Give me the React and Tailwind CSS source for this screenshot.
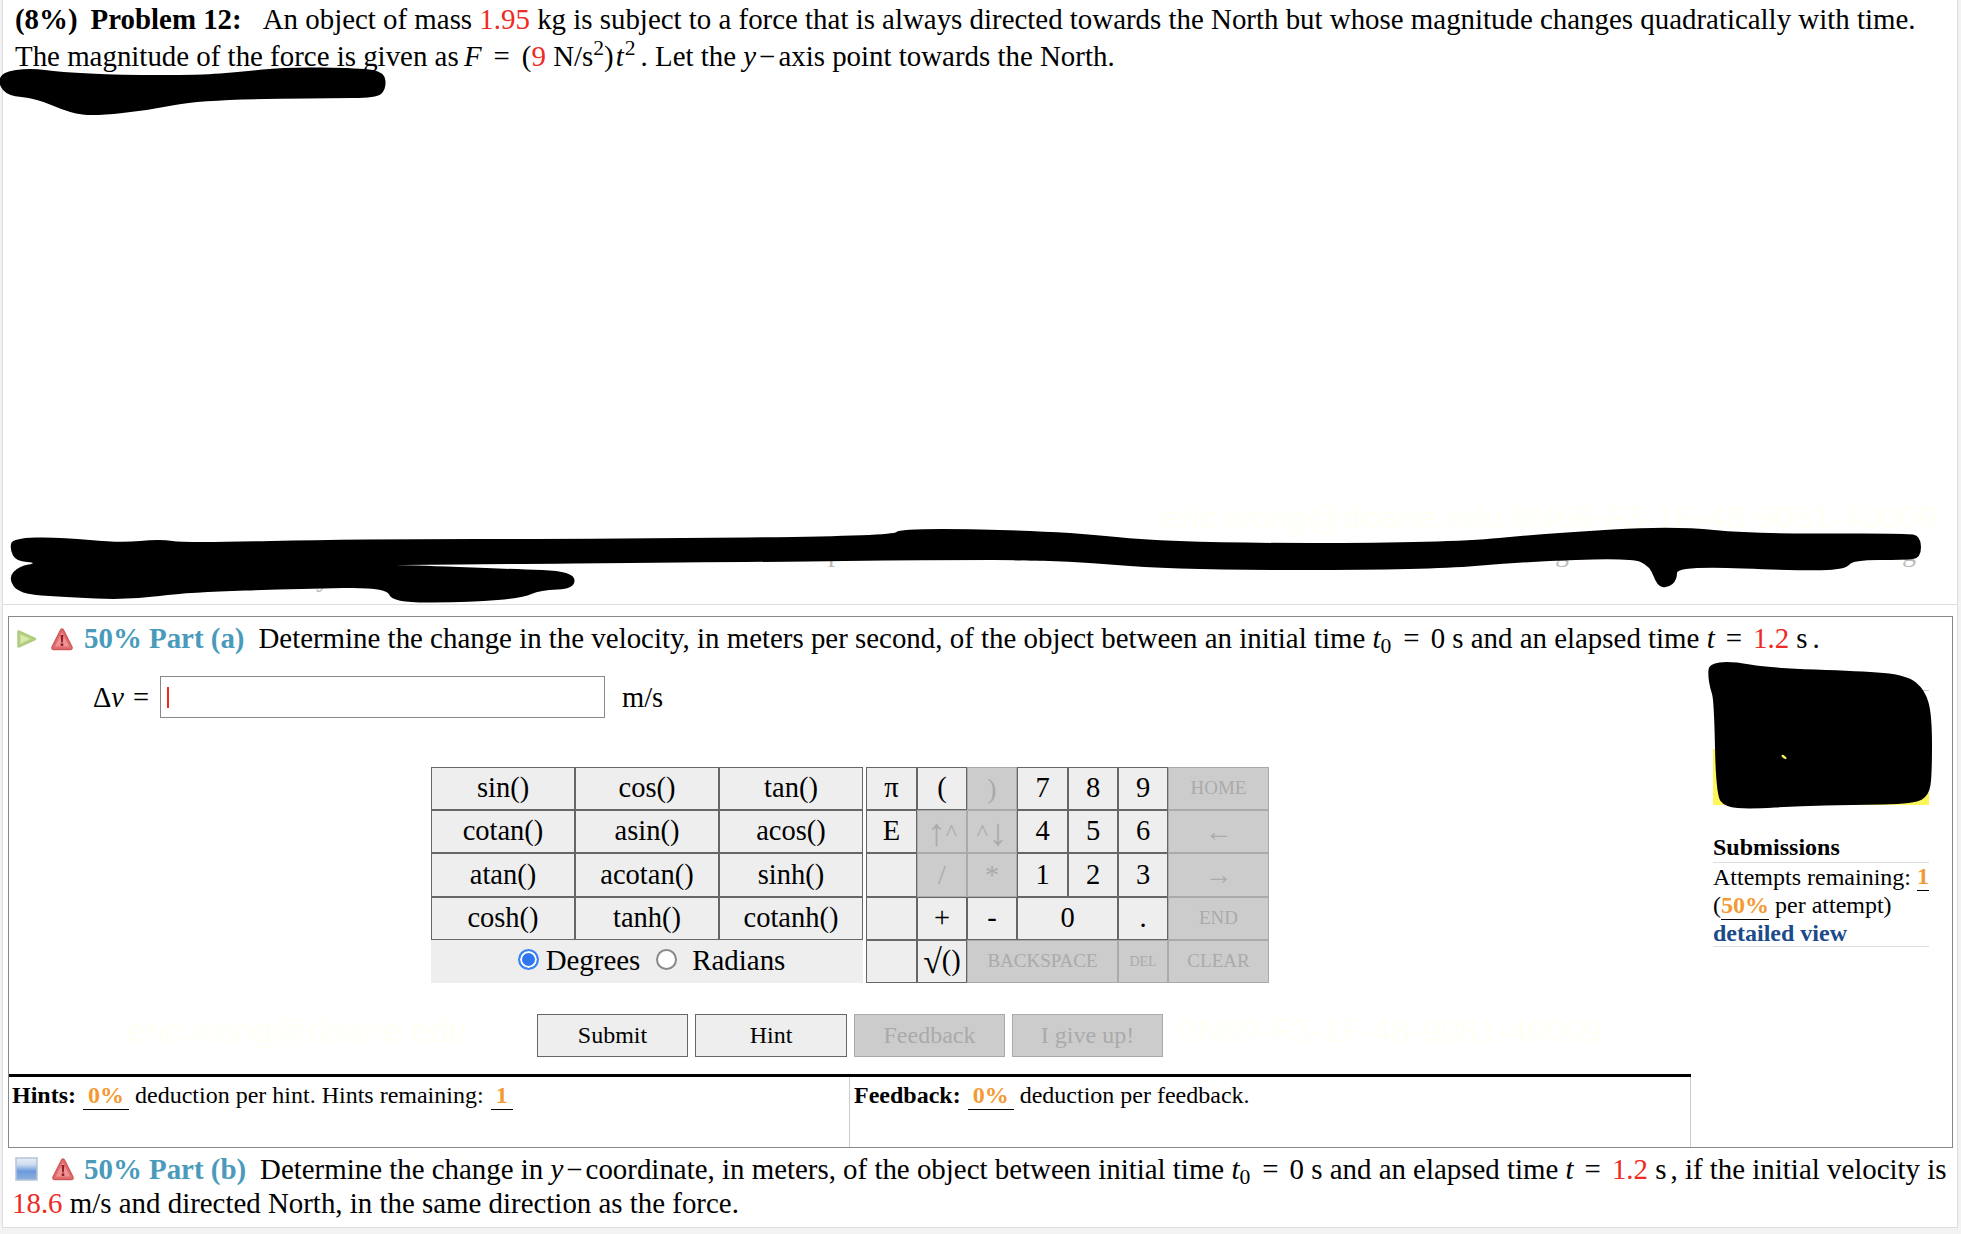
import React from "react";

const smooth = (pts) => {
  const n = pts.length;
  const mid = (a, b) => [(a[0] + b[0]) / 2, (a[1] + b[1]) / 2];
  let d = "";
  const start = mid(pts[n - 1], pts[0]);
  d += `M${start[0]} ${start[1]}`;
  for (let i = 0; i < n; i++) {
    const m = mid(pts[i], pts[(i + 1) % n]);
    d += ` Q${pts[i][0]} ${pts[i][1]} ${m[0]} ${m[1]}`;
  }
  return d + " Z";
};

const blobA = [[2, 72], [30, 68], [60, 72], [120, 75], [200, 75], [240, 72], [285, 67], [360, 68], [385, 72], [386, 90], [376, 98], [330, 98], [200, 100], [150, 110], [95, 116], [70, 113], [35, 98], [8, 96], [-2, 84]];
const blobB = [
  [12, 538], [60, 537], [120, 543], [160, 539], [185, 543], [357, 539], [600, 539], [893, 536], [900, 528], [1061, 531], [1172, 543], [1447, 543], [1551, 533], [1674, 526], [1754, 534], [1905, 533], [1921, 536], [1921, 558], [1905, 560], [1853, 560], [1846, 569], [1809, 571], [1677, 566], [1677, 580], [1668, 588], [1657, 586], [1650, 566], [1631, 558], [1521, 562], [1429, 570], [1172, 570], [1061, 560], [925, 560], [765, 562], [383, 565], [408, 565], [510, 569], [574, 571], [575, 589], [540, 590], [523, 598], [472, 602], [392, 603], [387, 587], [300, 589], [191, 592], [128, 600], [64, 597], [19, 594], [8, 578], [19, 566], [38, 563], [16, 561], [10, 550],
];
const blobC = [[1708, 675], [1709, 664], [1730, 661], [1770, 668], [1860, 671], [1907, 675], [1925, 690], [1932, 715], [1932, 775], [1929, 795], [1915, 804], [1850, 805], [1800, 806], [1750, 809], [1725, 807], [1716, 795], [1714, 700], [1710, 688]];

const GreenArrow = () => (
  <svg width="21" height="20" viewBox="0 0 21 20" className="shrink-0">
    <path d="M2.5 2.5 L19 10 L2.5 17.5 Z" fill="#c6dd8e" stroke="#b1cc80" strokeWidth="2.5" strokeLinejoin="round" />
    <path d="M5 6 L13 10 L5 14 Z" fill="#d9eab0" />
  </svg>
);

const Warn = () => (
  <svg width="24" height="24" viewBox="0 0 24 24" className="shrink-0">
    <path d="M12 2 C13 2 13.5 3 14 4 L22 20 C22.5 21.5 22 22.5 20 22.5 L4 22.5 C2 22.5 1.5 21.5 2 20 L10 4 C10.5 3 11 2 12 2 Z" fill="#e46c6e" stroke="#c9585a" strokeWidth="1.3" />
    <path d="M12 5.5 L19 19.5 L5 19.5 Z" fill="#ee9496" />
    <path d="M10.6 8 H13.4 L12.8 15.5 H11.2 Z" fill="#8e2226" />
    <rect x="10.7" y="16.4" width="2.6" height="2.6" fill="#8e2226" />
  </svg>
);

const BlueBox = () => (
  <svg width="23" height="24" viewBox="0 0 23 24" className="shrink-0">
    <defs>
      <linearGradient id="bb" x1="0" y1="0" x2="0" y2="1">
        <stop offset="0" stopColor="#e6edf6" />
        <stop offset="0.3" stopColor="#cfdcf0" />
        <stop offset="0.6" stopColor="#6a9adb" />
        <stop offset="1" stopColor="#8fb0dd" />
      </linearGradient>
    </defs>
    <rect x="1" y="1" width="21" height="22" fill="url(#bb)" stroke="#b4c3d6" strokeWidth="1.5" />
  </svg>
);

const Red = ({ children }) => <span className="text-[#ee2a24]">{children}</span>;
const Eq = () => <span className="mx-[11px]">=</span>;
const Orange = ({ children, className = "" }) => (
  <span className={`inline-block font-bold text-[#f39a34] border-b border-black leading-[27px] ${className}`}>{children}</span>
);

const Fn = ({ children }) => (
  <div className="flex items-center justify-center bg-[#eeeeee] border border-[#666666] text-[28.5px] text-black">{children}</div>
);
const Key = ({ children, span = "", size = "text-[28.5px]" }) => (
  <div className={`flex items-center justify-center bg-[#eeeeee] border border-[#666666] text-black ${size} ${span}`}>{children}</div>
);
const Off = ({ children, span = "", size = "text-[19px]" }) => (
  <div className={`flex items-center justify-center bg-[#cccccc] border border-[#aaaaaa] text-[#aaaaaa] ${size} ${span}`}>{children}</div>
);

const Btn = ({ children, off, w }) => (
  <div className={`flex items-center justify-center h-[43px] border text-[24px] pb-[1px] ${w} ${off ? "bg-[#cccccc] border-[#aaaaaa] text-[#aaaaaa]" : "bg-[#eeeeee] border-[#666666] text-black"}`}>
    {children}
  </div>
);

export default function App() {
  return (
    <div className="relative w-[1961px] h-[1234px] overflow-hidden bg-[#f3f3f3] text-black font-['Liberation_Serif',serif]">
      <div className="ml-[2px] w-[1956px] h-[1228px] bg-white border-x border-b border-[#dddddd] flex flex-col">
        {/* Problem statement */}
        <div className="h-[605px] border-b border-[#dddddd] pl-[12px] pt-[1px] text-[28.9px] leading-[37px] whitespace-nowrap">
          <div>
            <b>(8%)</b>
            <b className="ml-[13px]">Problem 12:</b>
            <span className="ml-[21px]">An object of mass <Red>1.95</Red> kg is subject to a force that is always directed towards the North but whose magnitude changes quadratically with time.</span>
          </div>
          <div>
            The magnitude of the force is given as <i className="-ml-[2px]">F</i><span className="mx-[12px]">=</span>(<Red>9</Red> N/s<sup>2</sup>)<i className="ml-[2px]">t</i><sup className="ml-[1px]">2</sup><span className="ml-[5px]">.</span> Let the <i>y</i><span className="mx-[3px]">−</span>axis point towards the North.
          </div>
        </div>

        {/* Part (a) */}
        <div className="mt-[11px] ml-[5px] w-[1945px] h-[532px] border border-[#888888] flex flex-col">
          <div className="h-[43px] flex items-center pl-[7px] text-[28.9px] whitespace-nowrap">
            <GreenArrow />
            <span className="ml-[13px]"><Warn /></span>
            <b className="ml-[10px] text-[#4a9abb]">50% Part (a)</b>
            <span className="ml-[14px]">Determine the change in the velocity, in meters per second, of the object between an initial time <i>t</i><sub className="mr-[1px]">0</sub><Eq />0 s and an elapsed time <i>t</i><Eq /><Red>1.2</Red> s<span className="ml-[5px]">.</span></span>
          </div>

          <div className="flex flex-1">
            <div className="w-[1682px] flex flex-col">
              {/* answer row */}
              <div className="mt-[16px] ml-[84px] h-[42px] flex items-center text-[28.5px]">
                <span className="w-[67px] whitespace-nowrap pt-[2px]">Δ<i>v</i><span className="ml-[9px]">=</span></span>
                <div className="w-[445px] h-[42px] border border-[#888888] bg-white flex items-center pl-[6px]">
                  <div className="w-[2px] h-[21px] bg-[#ee2a24]" />
                </div>
                <span className="ml-[17px] pt-[2px]">m/s</span>
              </div>

              {/* keypad */}
              <div className="mt-[49px] ml-[422px] flex gap-[3px]">
                <div className="grid grid-cols-[144px_144px_144px] grid-rows-[43px_43px_44px_43px_43px]">
                  <Fn>sin()</Fn><Fn>cos()</Fn><Fn>tan()</Fn>
                  <Fn>cotan()</Fn><Fn>asin()</Fn><Fn>acos()</Fn>
                  <Fn>atan()</Fn><Fn>acotan()</Fn><Fn>sinh()</Fn>
                  <Fn>cosh()</Fn><Fn>tanh()</Fn><Fn>cotanh()</Fn>
                  <div className="col-span-3 flex items-center justify-center bg-[#eeeeee] text-[28.9px] pl-[9px] pb-[2px]">
                    <input type="radio" readOnly checked className="appearance-none w-[21px] h-[21px] rounded-full border-2 border-[#3b82f6] bg-[#2f76f0] shadow-[inset_0_0_0_2px_#ffffff] mb-[2px]" />
                    <span className="ml-[7px]">Degrees</span>
                    <input type="radio" readOnly className="ml-[16px] appearance-none w-[21px] h-[21px] rounded-full border-2 border-[#888888] bg-white mb-[2px]" />
                    <span className="ml-[15px]">Radians</span>
                  </div>
                </div>
                <div className="grid grid-cols-[51px_50px_50px_51px_50px_50px_101px] grid-rows-[43px_43px_44px_43px_43px]">
                  <Key>π</Key><Key>(</Key><Off size="text-[28px]">)</Off><Key>7</Key><Key>8</Key><Key>9</Key><Off>HOME</Off>
                  <Key>E</Key>
                  <Off size="text-[24px]"><span className="text-[38px] leading-none">↑</span><span>^</span></Off>
                  <Off size="text-[24px]"><span>^</span><span className="text-[38px] leading-none">↓</span></Off>
                  <Key>4</Key><Key>5</Key><Key>6</Key><Off size="text-[28px]">←</Off>
                  <Key></Key><Off size="text-[28px]">/</Off><Off size="text-[28px]">*</Off><Key>1</Key><Key>2</Key><Key>3</Key><Off size="text-[28px]">→</Off>
                  <Key></Key><Key>+</Key><Key>-</Key><Key span="col-span-2">0</Key><Key>.</Key><Off>END</Off>
                  <Key></Key><Key><span className="text-[34px] leading-none">√</span>()</Key><Off span="col-span-3">BACKSPACE</Off><Off size="text-[14px]">DEL</Off><Off>CLEAR</Off>
                </div>
              </div>

              {/* buttons */}
              <div className="mt-[31px] ml-[528px] flex gap-[7px]">
                <Btn w="w-[151px]">Submit</Btn>
                <Btn w="w-[152px]">Hint</Btn>
                <Btn w="w-[151px]" off>Feedback</Btn>
                <Btn w="w-[151px]" off>I give up!</Btn>
              </div>

              {/* hints / feedback */}
              <div className="mt-[17px] flex-1 border-t-[3px] border-black flex text-[24px] whitespace-nowrap">
                <div className="w-[841px] border-r border-[#cccccc] pl-[3px]">
                  <b>Hints:</b>
                  <Orange className="ml-[7px] px-[5px]">0%</Orange>
                  <span className="ml-[6px]">deduction per hint. Hints remaining:</span>
                  <Orange className="ml-[7px] px-[5px]">1</Orange>
                </div>
                <div className="flex-1 border-r border-[#cccccc] pl-[4px]">
                  <b>Feedback:</b>
                  <Orange className="ml-[7px] px-[5px]">0%</Orange>
                  <span className="ml-[6px]">deduction per feedback.</span>
                </div>
              </div>
            </div>

            {/* right column */}
            <div className="ml-[22px] w-[216px] flex flex-col">
              <div className="mt-[30px] h-[115px] border-t border-[#cccccc] flex flex-col justify-end">
                <div className="h-[56px] bg-[#fdf659]" />
              </div>
              <div className="mt-[28px] text-[24px] leading-[28px]">
                <div className="font-bold border-b border-[#dddddd] leading-[29px]">Submissions</div>
                <div className="whitespace-nowrap flex justify-between">
                  <span>Attempts remaining:</span>
                  <span className="font-bold text-[#f39a34] border-b border-black leading-[27px] h-[28px]">1</span>
                </div>
                <div className="whitespace-nowrap">
                  (<span className="font-bold text-[#f39a34] inline-block border-b border-black leading-[27px]">50%</span> per attempt)
                </div>
                <div className="font-bold text-[#1d4a8a] border-b border-[#dddddd] leading-[26px]">detailed view</div>
              </div>
            </div>
          </div>
        </div>

        {/* Part (b) */}
        <div className="pt-[3px] text-[28.9px] leading-[33px] whitespace-nowrap">
          <div className="flex items-center h-[36px] pl-[12px]">
            <BlueBox />
            <span className="ml-[13px]"><Warn /></span>
            <b className="ml-[9px] text-[#4a9abb]">50% Part (b)</b>
            <span className="ml-[14px]">Determine the change in <i>y</i><span className="mx-[3px]">−</span>coordinate, in meters, of the object between initial time <i>t</i><sub className="mr-[1px]">0</sub><Eq />0 s and an elapsed time <i>t</i><Eq /><Red>1.2</Red> s<span className="ml-[4px]">,</span> if the initial velocity is</span>
          </div>
          <div className="pl-[9px]"><Red>18.6</Red> m/s and directed North, in the same direction as the force.</div>
        </div>
      </div>

      {/* faint watermark and stray text peeking out below the redactions */}
      <span className="absolute left-[127px] top-[1010px] text-[34px] leading-[40px] font-['Liberation_Sans',sans-serif] text-[#fffff6]">eric.wong@doane.edu</span>
      <span className="absolute left-[1178px] top-[1010px] text-[34px] leading-[40px] font-['Liberation_Sans',sans-serif] text-[#fffff6]">9N69-F3-1F-48-9081-40009</span>
      <span className="absolute left-[1162px] top-[497px] text-[34px] leading-[40px] font-['Liberation_Sans',sans-serif] text-[#fffff6] whitespace-nowrap">eric.wong@doane.edu 9N69-F3-1F-48-9081-40009</span>
      <span className="absolute left-[828px] top-[538px] text-[28px] leading-[28px] text-[#bbbbbb]">p</span>
      <span className="absolute left-[1013px] top-[538px] text-[28px] leading-[28px] text-[#bbbbbb]">serv</span>
      <span className="absolute left-[1555px] top-[538px] text-[28px] leading-[28px] text-[#bbbbbb]">g</span>
      <span className="absolute left-[1902px] top-[538px] text-[28px] leading-[28px] text-[#bbbbbb]">g</span>
      <span className="absolute left-[316px] top-[563px] text-[28px] leading-[28px] text-[#bbbbbb]">y</span>

      {/* hand-drawn redactions */}
      <svg className="absolute left-0 top-0 pointer-events-none" width="1961" height="1234" viewBox="0 0 1961 1234">
        <path d={smooth(blobA)} fill="#000" />
        <path d={smooth(blobB)} fill="#000" />
        <path d={smooth(blobC)} fill="#000" />
        <ellipse cx="1784" cy="757" rx="3" ry="1.3" transform="rotate(35 1784 757)" fill="#fdf659" />
      </svg>
    </div>
  );
}
